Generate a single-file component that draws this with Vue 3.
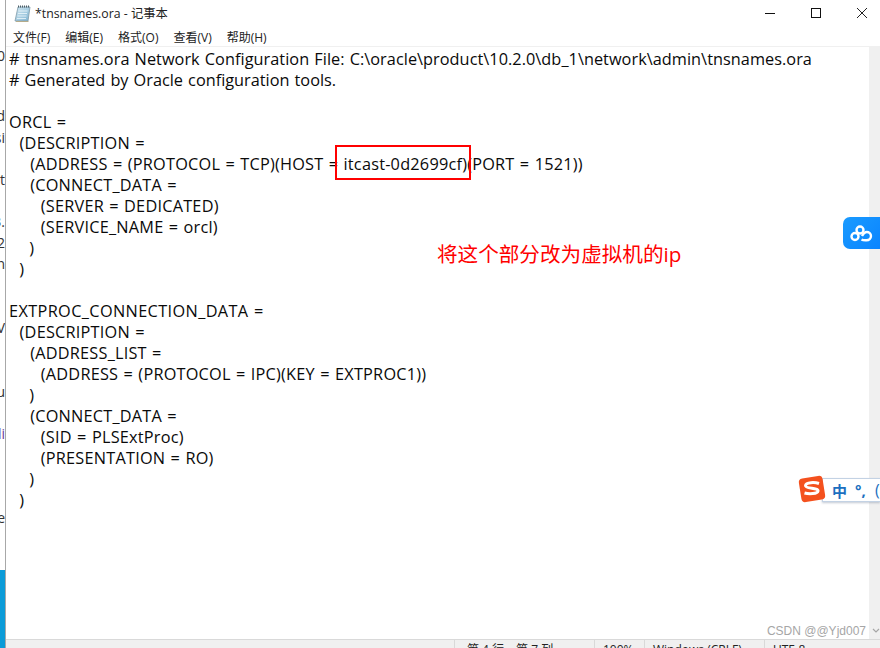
<template>
  <div class="screen">
    <div class="strip">
      <span v-for="f in fragments" :key="f.t + f.y" class="frag" :style="{ top: f.y + 'px', color: f.c }">{{ f.t }}</span>
      <div class="blue"></div>
    </div>
    <div class="window">
      <header class="titlebar">
        <div class="title">
          <svg class="note" width="17" height="18" viewBox="0 0 17 18">
            <defs>
              <linearGradient id="pad" x1="0" y1="0" x2="1" y2="1">
                <stop offset="0" stop-color="#d3e8f2"/>
                <stop offset="1" stop-color="#7fb4d2"/>
              </linearGradient>
            </defs>
            <path d="M4 3h12l-2 14H1z" fill="url(#pad)" stroke="#7f9aa8" stroke-width=".8"/>
            <path d="M4.500 7h9M4 9.500h9M3.500 12h9M3 14.500h9" stroke="#eef7fb" stroke-width=".8"/>
            <path d="M14.500 17.500H2" stroke="#b5ab8a" stroke-width="1"/>
            <path d="M4 2.500h12" stroke="#4d5f68" stroke-width="2" stroke-dasharray="1 1"/>
          </svg>
          <span>*tnsnames.ora - 记事本</span>
        </div>
        <div class="controls">
          <svg width="12" height="12" viewBox="0 0 12 12"><path d="M1 6.500h10" stroke="#111" stroke-width="1"/></svg>
          <svg width="12" height="12" viewBox="0 0 12 12"><rect x="1.500" y="1.500" width="9" height="9" fill="none" stroke="#111"/></svg>
          <svg width="12" height="12" viewBox="0 0 12 12"><path d="M1 1l10 10M11 1L1 11" stroke="#222" stroke-width="1"/></svg>
        </div>
      </header>
      <nav class="menu">
        <span v-for="m in menus" :key="m">{{ m }}</span>
      </nav>
      <div class="body">
        <main class="editor">
          <div v-for="(l, i) in lines" :key="i" class="line" :class="l.k">{{ l.t || '\u00a0' }}</div>
          <div class="marker"></div>
          <div class="note-text">将这个部分改为虚拟机的ip</div>
        </main>
        <aside class="scroll">
          <svg class="chev" width="8" height="6" viewBox="0 0 8 6"><path d="M1 1l3 3 3-3" fill="none" stroke="#a6a6a6" stroke-width="1.200"/></svg>
        </aside>
        <div class="cloud">
          <svg width="23" height="17" viewBox="0 0 23 17" fill="none" stroke="#fff" stroke-width="2.400">
            <circle cx="10" cy="5" r="3.500"/>
            <circle cx="5" cy="11.500" r="3.500"/>
            <path d="M11.500 14.500c1.500 1 3.500 .8 5 .8 2.500 0 4.500-1.800 4.500-4.200s-2-4.100-4.300-4.100c-2.200 0-3.300 1.600-4.700 4"/>
          </svg>
        </div>
        <div class="ime">
          <svg class="sogou" width="28" height="28" viewBox="0 0 28 28">
            <rect x="2" y="2" width="24" height="24" rx="4" fill="#f4511e" transform="rotate(-9 14 14)"/>
            <path d="M21 8.500c-4-1.300-13-1.500-13.500 2-.5 3.800 13 1.800 12.500 5.500-.4 3-9 3.300-13.500 2" fill="none" stroke="#fff" stroke-width="3"/>
          </svg>
          <span class="zh">中</span><span class="dot">°,</span><span class="paren">(</span>
        </div>
      </div>
      <footer class="status">
        <div class="cell c0"></div>
        <div class="cell c1">第 4 行，第 7 列</div>
        <div class="cell c2">100%</div>
        <div class="cell c3">Windows (CRLF)</div>
        <div class="cell c4">UTF-8</div>
      </footer>
      <div class="watermark">CSDN @@Yjd007</div>
    </div>
  </div>
</template>

<script setup>
const menus = ['文件(F)', '编辑(E)', '格式(O)', '查看(V)', '帮助(H)']
const fragments = [
  { t: '0', y: 46, c: '#333' },
  { t: 'd', y: 106, c: '#333' },
  { t: 'si', y: 128, c: '#333' },
  { t: 'ct', y: 170, c: '#333' },
  { t: '3.', y: 212, c: '#333' },
  { t: '2', y: 233, c: '#333' },
  { t: 'n', y: 254, c: '#333' },
  { t: 'V', y: 318, c: '#333' },
  { t: 'u', y: 382, c: '#333' },
  { t: 'li', y: 424, c: '#6a3d9a' },
  { t: 'e', y: 508, c: '#333' },
]
const lines = [
  { t: '# tnsnames.ora Network Configuration File: C:\\oracle\\product\\10.2.0\\db_1\\network\\admin\\tnsnames.ora', k: 'path' },
  { t: '# Generated by Oracle configuration tools.' },
  { t: '' },
  { t: 'ORCL =', k: 'caps' },
  { t: '  (DESCRIPTION =', k: 'caps' },
  { t: '    (ADDRESS = (PROTOCOL = TCP)(HOST = itcast-0d2699cf)(PORT = 1521))', k: 'caps' },
  { t: '    (CONNECT_DATA =', k: 'caps' },
  { t: '      (SERVER = DEDICATED)', k: 'caps' },
  { t: '      (SERVICE_NAME = orcl)', k: 'caps' },
  { t: '    )' },
  { t: '  )' },
  { t: '' },
  { t: 'EXTPROC_CONNECTION_DATA =', k: 'long' },
  { t: '  (DESCRIPTION =', k: 'caps' },
  { t: '    (ADDRESS_LIST =', k: 'caps' },
  { t: '      (ADDRESS = (PROTOCOL = IPC)(KEY = EXTPROC1))', k: 'caps' },
  { t: '    )' },
  { t: '    (CONNECT_DATA =', k: 'caps' },
  { t: '      (SID = PLSExtProc)', k: 'caps' },
  { t: '      (PRESENTATION = RO)', k: 'caps' },
  { t: '    )' },
  { t: '  )' },
]
</script>

<style>
html, body { margin: 0; background: #fff; overflow: hidden; }
</style>

<style scoped>
.screen {
  width: 880px;
  height: 648px;
  display: flex;
  overflow: hidden;
  background: #fff;
  font-family: "Open Sans", "Noto Sans CJK SC", sans-serif;
}
.strip {
  position: relative;
  width: 5px;
  flex: none;
  overflow: hidden;
  background: #fff;
  border-right: 1px solid #a8a8a8;
}
.frag {
  position: absolute;
  right: 0;
  font-size: 14px;
  line-height: 20px;
  white-space: nowrap;
}
.blue {
  position: absolute;
  left: 0;
  top: 570px;
  width: 5px;
  height: 78px;
  background: #0b9bd8;
}
.window {
  position: relative;
  flex: 1;
  min-width: 0;
  display: flex;
  flex-direction: column;
}
.titlebar {
  height: 26px;
  display: flex;
  align-items: center;
  justify-content: space-between;
}
.title {
  display: flex;
  align-items: center;
  gap: 4px;
  padding: 0 0 1px 8px;
  font-size: 12.300px;
  color: #222;
}
.controls {
  display: flex;
  gap: 34px;
  padding-right: 12px;
}
.menu {
  height: 20px;
  box-sizing: border-box;
  display: flex;
  gap: 15px;
  align-items: center;
  padding: 2px 0 0 7px;
  font-size: 12px;
  color: #222;
}
.body {
  position: relative;
  flex: 1;
  min-height: 0;
  display: flex;
  border-top: 1px solid #f0f0f0;
}
.editor {
  position: relative;
  flex: 1;
  padding: 2px 0 0 3px;
  color: #0a0a0a;
  font-size: 16.300px;
  line-height: 21px;
  word-spacing: .85px;
}
.line { white-space: pre; }
.path { letter-spacing: .04px; }
.caps { letter-spacing: .22px; }
.long { letter-spacing: .37px; }
.marker {
  position: absolute;
  left: 329px;
  top: 98px;
  width: 132px;
  height: 31px;
  border: 2px solid #f00;
}
.note-text {
  position: absolute;
  left: 431px;
  top: 193px;
  font-size: 20.600px;
  line-height: 28px;
  word-spacing: 0;
  color: #f00;
}
.scroll {
  position: relative;
  width: 11px;
  flex: none;
  background: #f0f0f0;
}
.chev {
  position: absolute;
  left: 3px;
  bottom: 5px;
}
.cloud {
  position: absolute;
  right: 0;
  top: 170px;
  width: 37px;
  height: 32px;
  border-radius: 7px 0 0 7px;
  background: linear-gradient(135deg, #1a9bff, #0a84ff);
  display: flex;
  align-items: center;
  padding-left: 7px;
  box-sizing: border-box;
}
.ime {
  position: absolute;
  left: 816px;
  top: 431px;
  width: 58px;
  height: 24px;
  box-sizing: border-box;
  background: #fff;
  border: 1px solid #c3d2e4;
  border-right: 0;
  box-shadow: 0 1px 2px rgba(80, 100, 130, .35);
  display: flex;
  align-items: center;
  padding-left: 9px;
  color: #1c6fc0;
  font-weight: 700;
  white-space: nowrap;
}
.sogou {
  position: absolute;
  left: -25px;
  top: -4px;
}
.zh { font-size: 15px; width: 23px; }
.dot { font-size: 15px; width: 20px; }
.paren { font-size: 16px; font-weight: 400; }
.status {
  height: 8px;
  flex: none;
  display: flex;
  overflow: hidden;
  background: #f0f0f0;
  border-top: 1px solid #d9d9d9;
  font-size: 12px;
  line-height: 20px;
  color: #222;
}
.cell {
  height: 20px;
  box-sizing: border-box;
  border-left: 1px solid #d9d9d9;
  padding-left: 12px;
  white-space: nowrap;
}
.c0 { width: 448px; border-left: 0; }
.c1 { width: 140px; }
.c2 { width: 50px; padding-left: 8px; }
.c3 { width: 120px; padding-left: 8px; }
.c4 { flex: 1; padding-left: 8px; }
.watermark {
  position: absolute;
  right: 14px;
  bottom: 9px;
  font-family: "Liberation Sans", sans-serif;
  font-size: 12px;
  line-height: 15px;
  color: #a6a6a6;
}
</style>
